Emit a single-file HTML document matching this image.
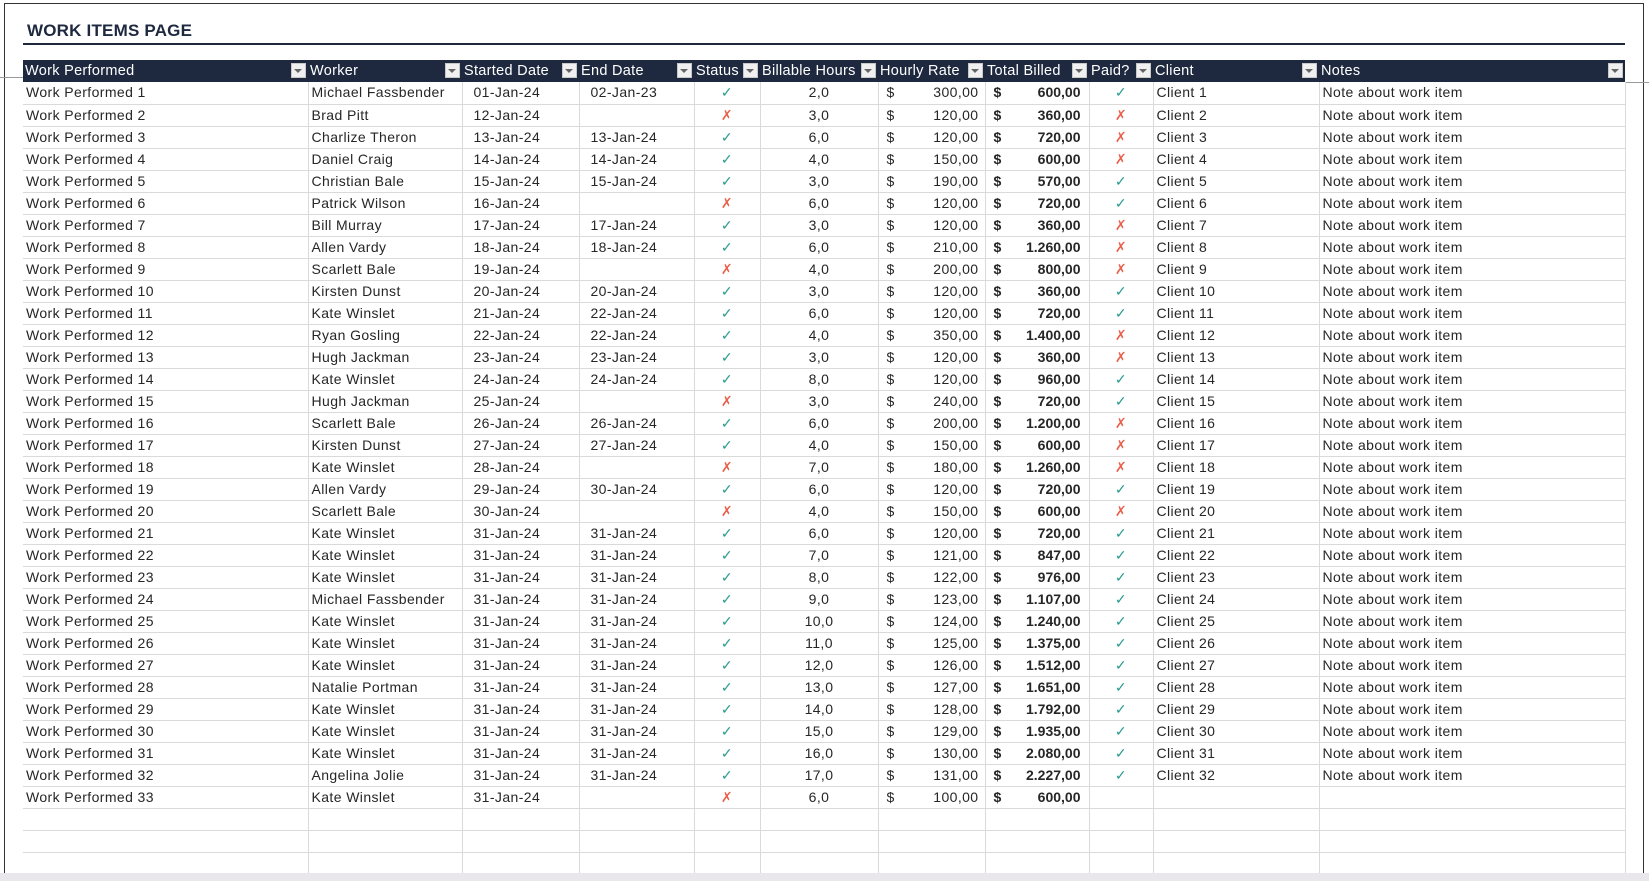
<!DOCTYPE html>
<html><head><meta charset="utf-8"><style>
*{margin:0;padding:0;box-sizing:content-box}
body{width:1649px;height:881px;background:#fff;position:relative;overflow:hidden;font-family:"Liberation Sans",sans-serif;color:#262626}
#frame{position:absolute;left:4px;top:3px;width:1638px;height:872px;border:1px solid #333;border-bottom:none}
#strip{position:absolute;left:0;top:873px;width:1649px;height:8px;background:#e9e7eb}
#title{position:absolute;left:27px;top:21px;font-size:17px;font-weight:bold;color:#1e2940;letter-spacing:0.2px}
#rule{position:absolute;left:23px;top:43px;width:1602px;height:2px;background:#1e2940}
table{position:absolute;left:23px;top:60px;border-collapse:collapse;table-layout:fixed;font-size:14px;letter-spacing:0.4px;width:1602px}
tr{height:22px}
th{background:#1e2940;color:#fff;font-weight:normal;text-align:left;height:22px;padding:0 0 0 2px;font-size:14.5px;letter-spacing:0.3px;position:relative;white-space:nowrap;overflow:hidden}
th i{position:absolute;right:2px;top:3px;width:13px;height:13px;background:#f0f0f0;border:1px solid #c8c8c8}
th i:after{content:"";position:absolute;left:2px;top:5px;border-left:4px solid transparent;border-right:4px solid transparent;border-top:4px solid #666}
td{height:21px;border:1px solid #dadada;border-top:none;padding:0 3px;white-space:nowrap;overflow:hidden;line-height:21px}
td:first-child{border-left:none}
.d{padding-left:11px}
.c{text-align:center}
.ok{color:#2a9d8f;text-align:center}
.no{color:#e8604c;text-align:center}
.m span{float:left;padding-left:5px}.m{text-align:right;padding-right:6px}
.b{font-weight:bold;text-align:right;padding-right:8px;letter-spacing:0}.b span{float:left;padding-left:5px}
</style></head><body>
<div id="frame"></div>
<div id="title">WORK ITEMS PAGE</div>
<div id="rule"></div>
<div style="position:absolute;left:0;top:77px;width:23px;height:1px;background:#999"></div>
<div style="position:absolute;left:1625px;top:82px;width:24px;height:1px;background:#999"></div>
<table>
<colgroup><col style="width:285px"><col style="width:154px"><col style="width:117px"><col style="width:115px"><col style="width:66px"><col style="width:118px"><col style="width:107px"><col style="width:104px"><col style="width:64px"><col style="width:166px"><col style="width:306px"></colgroup>
<tr><th>Work Performed<i></i></th><th>Worker<i></i></th><th>Started Date<i></i></th><th>End Date<i></i></th><th>Status<i></i></th><th>Billable Hours<i></i></th><th>Hourly Rate<i></i></th><th>Total Billed<i></i></th><th>Paid?<i></i></th><th>Client<i></i></th><th>Notes<i></i></th></tr>
<tr><td>Work Performed 1</td><td>Michael Fassbender</td><td class="d">01-Jan-24</td><td class="d">02-Jan-23</td><td class="ok">✓</td><td class="c">2,0</td><td class="m"><span>$</span>300,00</td><td class="b"><span>$</span>600,00</td><td class="ok">✓</td><td>Client 1</td><td>Note about work item</td></tr>
<tr><td>Work Performed 2</td><td>Brad Pitt</td><td class="d">12-Jan-24</td><td></td><td class="no">✗</td><td class="c">3,0</td><td class="m"><span>$</span>120,00</td><td class="b"><span>$</span>360,00</td><td class="no">✗</td><td>Client 2</td><td>Note about work item</td></tr>
<tr><td>Work Performed 3</td><td>Charlize Theron</td><td class="d">13-Jan-24</td><td class="d">13-Jan-24</td><td class="ok">✓</td><td class="c">6,0</td><td class="m"><span>$</span>120,00</td><td class="b"><span>$</span>720,00</td><td class="no">✗</td><td>Client 3</td><td>Note about work item</td></tr>
<tr><td>Work Performed 4</td><td>Daniel Craig</td><td class="d">14-Jan-24</td><td class="d">14-Jan-24</td><td class="ok">✓</td><td class="c">4,0</td><td class="m"><span>$</span>150,00</td><td class="b"><span>$</span>600,00</td><td class="no">✗</td><td>Client 4</td><td>Note about work item</td></tr>
<tr><td>Work Performed 5</td><td>Christian Bale</td><td class="d">15-Jan-24</td><td class="d">15-Jan-24</td><td class="ok">✓</td><td class="c">3,0</td><td class="m"><span>$</span>190,00</td><td class="b"><span>$</span>570,00</td><td class="ok">✓</td><td>Client 5</td><td>Note about work item</td></tr>
<tr><td>Work Performed 6</td><td>Patrick Wilson</td><td class="d">16-Jan-24</td><td></td><td class="no">✗</td><td class="c">6,0</td><td class="m"><span>$</span>120,00</td><td class="b"><span>$</span>720,00</td><td class="ok">✓</td><td>Client 6</td><td>Note about work item</td></tr>
<tr><td>Work Performed 7</td><td>Bill Murray</td><td class="d">17-Jan-24</td><td class="d">17-Jan-24</td><td class="ok">✓</td><td class="c">3,0</td><td class="m"><span>$</span>120,00</td><td class="b"><span>$</span>360,00</td><td class="no">✗</td><td>Client 7</td><td>Note about work item</td></tr>
<tr><td>Work Performed 8</td><td>Allen Vardy</td><td class="d">18-Jan-24</td><td class="d">18-Jan-24</td><td class="ok">✓</td><td class="c">6,0</td><td class="m"><span>$</span>210,00</td><td class="b"><span>$</span>1.260,00</td><td class="no">✗</td><td>Client 8</td><td>Note about work item</td></tr>
<tr><td>Work Performed 9</td><td>Scarlett Bale</td><td class="d">19-Jan-24</td><td></td><td class="no">✗</td><td class="c">4,0</td><td class="m"><span>$</span>200,00</td><td class="b"><span>$</span>800,00</td><td class="no">✗</td><td>Client 9</td><td>Note about work item</td></tr>
<tr><td>Work Performed 10</td><td>Kirsten Dunst</td><td class="d">20-Jan-24</td><td class="d">20-Jan-24</td><td class="ok">✓</td><td class="c">3,0</td><td class="m"><span>$</span>120,00</td><td class="b"><span>$</span>360,00</td><td class="ok">✓</td><td>Client 10</td><td>Note about work item</td></tr>
<tr><td>Work Performed 11</td><td>Kate Winslet</td><td class="d">21-Jan-24</td><td class="d">22-Jan-24</td><td class="ok">✓</td><td class="c">6,0</td><td class="m"><span>$</span>120,00</td><td class="b"><span>$</span>720,00</td><td class="ok">✓</td><td>Client 11</td><td>Note about work item</td></tr>
<tr><td>Work Performed 12</td><td>Ryan Gosling</td><td class="d">22-Jan-24</td><td class="d">22-Jan-24</td><td class="ok">✓</td><td class="c">4,0</td><td class="m"><span>$</span>350,00</td><td class="b"><span>$</span>1.400,00</td><td class="no">✗</td><td>Client 12</td><td>Note about work item</td></tr>
<tr><td>Work Performed 13</td><td>Hugh Jackman</td><td class="d">23-Jan-24</td><td class="d">23-Jan-24</td><td class="ok">✓</td><td class="c">3,0</td><td class="m"><span>$</span>120,00</td><td class="b"><span>$</span>360,00</td><td class="no">✗</td><td>Client 13</td><td>Note about work item</td></tr>
<tr><td>Work Performed 14</td><td>Kate Winslet</td><td class="d">24-Jan-24</td><td class="d">24-Jan-24</td><td class="ok">✓</td><td class="c">8,0</td><td class="m"><span>$</span>120,00</td><td class="b"><span>$</span>960,00</td><td class="ok">✓</td><td>Client 14</td><td>Note about work item</td></tr>
<tr><td>Work Performed 15</td><td>Hugh Jackman</td><td class="d">25-Jan-24</td><td></td><td class="no">✗</td><td class="c">3,0</td><td class="m"><span>$</span>240,00</td><td class="b"><span>$</span>720,00</td><td class="ok">✓</td><td>Client 15</td><td>Note about work item</td></tr>
<tr><td>Work Performed 16</td><td>Scarlett Bale</td><td class="d">26-Jan-24</td><td class="d">26-Jan-24</td><td class="ok">✓</td><td class="c">6,0</td><td class="m"><span>$</span>200,00</td><td class="b"><span>$</span>1.200,00</td><td class="no">✗</td><td>Client 16</td><td>Note about work item</td></tr>
<tr><td>Work Performed 17</td><td>Kirsten Dunst</td><td class="d">27-Jan-24</td><td class="d">27-Jan-24</td><td class="ok">✓</td><td class="c">4,0</td><td class="m"><span>$</span>150,00</td><td class="b"><span>$</span>600,00</td><td class="no">✗</td><td>Client 17</td><td>Note about work item</td></tr>
<tr><td>Work Performed 18</td><td>Kate Winslet</td><td class="d">28-Jan-24</td><td></td><td class="no">✗</td><td class="c">7,0</td><td class="m"><span>$</span>180,00</td><td class="b"><span>$</span>1.260,00</td><td class="no">✗</td><td>Client 18</td><td>Note about work item</td></tr>
<tr><td>Work Performed 19</td><td>Allen Vardy</td><td class="d">29-Jan-24</td><td class="d">30-Jan-24</td><td class="ok">✓</td><td class="c">6,0</td><td class="m"><span>$</span>120,00</td><td class="b"><span>$</span>720,00</td><td class="ok">✓</td><td>Client 19</td><td>Note about work item</td></tr>
<tr><td>Work Performed 20</td><td>Scarlett Bale</td><td class="d">30-Jan-24</td><td></td><td class="no">✗</td><td class="c">4,0</td><td class="m"><span>$</span>150,00</td><td class="b"><span>$</span>600,00</td><td class="no">✗</td><td>Client 20</td><td>Note about work item</td></tr>
<tr><td>Work Performed 21</td><td>Kate Winslet</td><td class="d">31-Jan-24</td><td class="d">31-Jan-24</td><td class="ok">✓</td><td class="c">6,0</td><td class="m"><span>$</span>120,00</td><td class="b"><span>$</span>720,00</td><td class="ok">✓</td><td>Client 21</td><td>Note about work item</td></tr>
<tr><td>Work Performed 22</td><td>Kate Winslet</td><td class="d">31-Jan-24</td><td class="d">31-Jan-24</td><td class="ok">✓</td><td class="c">7,0</td><td class="m"><span>$</span>121,00</td><td class="b"><span>$</span>847,00</td><td class="ok">✓</td><td>Client 22</td><td>Note about work item</td></tr>
<tr><td>Work Performed 23</td><td>Kate Winslet</td><td class="d">31-Jan-24</td><td class="d">31-Jan-24</td><td class="ok">✓</td><td class="c">8,0</td><td class="m"><span>$</span>122,00</td><td class="b"><span>$</span>976,00</td><td class="ok">✓</td><td>Client 23</td><td>Note about work item</td></tr>
<tr><td>Work Performed 24</td><td>Michael Fassbender</td><td class="d">31-Jan-24</td><td class="d">31-Jan-24</td><td class="ok">✓</td><td class="c">9,0</td><td class="m"><span>$</span>123,00</td><td class="b"><span>$</span>1.107,00</td><td class="ok">✓</td><td>Client 24</td><td>Note about work item</td></tr>
<tr><td>Work Performed 25</td><td>Kate Winslet</td><td class="d">31-Jan-24</td><td class="d">31-Jan-24</td><td class="ok">✓</td><td class="c">10,0</td><td class="m"><span>$</span>124,00</td><td class="b"><span>$</span>1.240,00</td><td class="ok">✓</td><td>Client 25</td><td>Note about work item</td></tr>
<tr><td>Work Performed 26</td><td>Kate Winslet</td><td class="d">31-Jan-24</td><td class="d">31-Jan-24</td><td class="ok">✓</td><td class="c">11,0</td><td class="m"><span>$</span>125,00</td><td class="b"><span>$</span>1.375,00</td><td class="ok">✓</td><td>Client 26</td><td>Note about work item</td></tr>
<tr><td>Work Performed 27</td><td>Kate Winslet</td><td class="d">31-Jan-24</td><td class="d">31-Jan-24</td><td class="ok">✓</td><td class="c">12,0</td><td class="m"><span>$</span>126,00</td><td class="b"><span>$</span>1.512,00</td><td class="ok">✓</td><td>Client 27</td><td>Note about work item</td></tr>
<tr><td>Work Performed 28</td><td>Natalie Portman</td><td class="d">31-Jan-24</td><td class="d">31-Jan-24</td><td class="ok">✓</td><td class="c">13,0</td><td class="m"><span>$</span>127,00</td><td class="b"><span>$</span>1.651,00</td><td class="ok">✓</td><td>Client 28</td><td>Note about work item</td></tr>
<tr><td>Work Performed 29</td><td>Kate Winslet</td><td class="d">31-Jan-24</td><td class="d">31-Jan-24</td><td class="ok">✓</td><td class="c">14,0</td><td class="m"><span>$</span>128,00</td><td class="b"><span>$</span>1.792,00</td><td class="ok">✓</td><td>Client 29</td><td>Note about work item</td></tr>
<tr><td>Work Performed 30</td><td>Kate Winslet</td><td class="d">31-Jan-24</td><td class="d">31-Jan-24</td><td class="ok">✓</td><td class="c">15,0</td><td class="m"><span>$</span>129,00</td><td class="b"><span>$</span>1.935,00</td><td class="ok">✓</td><td>Client 30</td><td>Note about work item</td></tr>
<tr><td>Work Performed 31</td><td>Kate Winslet</td><td class="d">31-Jan-24</td><td class="d">31-Jan-24</td><td class="ok">✓</td><td class="c">16,0</td><td class="m"><span>$</span>130,00</td><td class="b"><span>$</span>2.080,00</td><td class="ok">✓</td><td>Client 31</td><td>Note about work item</td></tr>
<tr><td>Work Performed 32</td><td>Angelina Jolie</td><td class="d">31-Jan-24</td><td class="d">31-Jan-24</td><td class="ok">✓</td><td class="c">17,0</td><td class="m"><span>$</span>131,00</td><td class="b"><span>$</span>2.227,00</td><td class="ok">✓</td><td>Client 32</td><td>Note about work item</td></tr>
<tr><td>Work Performed 33</td><td>Kate Winslet</td><td class="d">31-Jan-24</td><td></td><td class="no">✗</td><td class="c">6,0</td><td class="m"><span>$</span>100,00</td><td class="b"><span>$</span>600,00</td><td></td><td></td><td></td></tr>
<tr><td></td><td></td><td></td><td></td><td></td><td></td><td></td><td></td><td></td><td></td><td></td></tr>
<tr><td></td><td></td><td></td><td></td><td></td><td></td><td></td><td></td><td></td><td></td><td></td></tr>
<tr><td style="border-bottom:none"></td><td style="border-bottom:none"></td><td style="border-bottom:none"></td><td style="border-bottom:none"></td><td style="border-bottom:none"></td><td style="border-bottom:none"></td><td style="border-bottom:none"></td><td style="border-bottom:none"></td><td style="border-bottom:none"></td><td style="border-bottom:none"></td><td style="border-bottom:none"></td></tr>
</table>
<div id="strip"></div>
</body></html>
